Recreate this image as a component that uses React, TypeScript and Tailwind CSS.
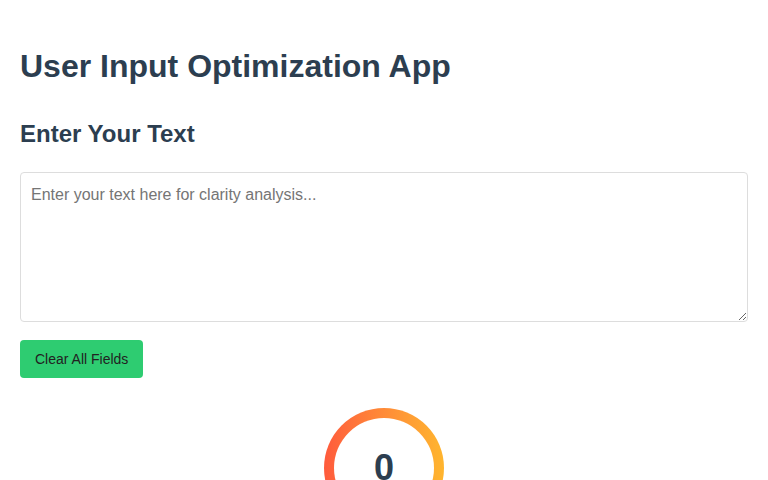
import { useState } from 'react';

export default function App() {
  const [text, setText] = useState('');
  const score = 0;

  return (
    <div className="min-h-screen bg-white px-5 pt-5 pb-10 font-['Liberation_Sans',Arial,sans-serif] text-[#333]">
      <h1 className="mt-[28px] mb-[35px] text-[32px] leading-[37px] font-bold text-[#2c3e50]">
        User Input Optimization App
      </h1>

      {/* Input section */}
      <h2 className="mb-[24px] text-[24px] leading-[28px] font-bold text-[#2c3e50]">
        Enter Your Text
      </h2>
      <textarea
        value={text}
        onChange={(e) => setText(e.target.value)}
        placeholder="Enter your text here for clarity analysis..."
        className="block w-full h-[150px] rounded-[4px] border border-[#ddd] px-[10px] py-[10px] text-[16px] leading-[24px] text-[#333] placeholder:text-[#757575] outline-none"
      />
      <button
        onClick={() => setText('')}
        className="mt-[18px] h-[38px] px-[15px] rounded-[4px] bg-[#2ecc71] text-[14px] text-[#222]"
      >
        Clear All Fields
      </button>

      {/* Clarity score ring */}
      <div className="mt-[30px] flex justify-center">
        <div className="w-[120px] h-[120px] rounded-full bg-gradient-to-r from-[#ff5a3c] to-[#ffb52e] p-[10px]">
          <div className="w-full h-full rounded-full bg-white flex items-center justify-center">
            <span className="text-[36px] leading-none font-bold text-[#2c3e50]">{score}</span>
          </div>
        </div>
      </div>
    </div>
  );
}
